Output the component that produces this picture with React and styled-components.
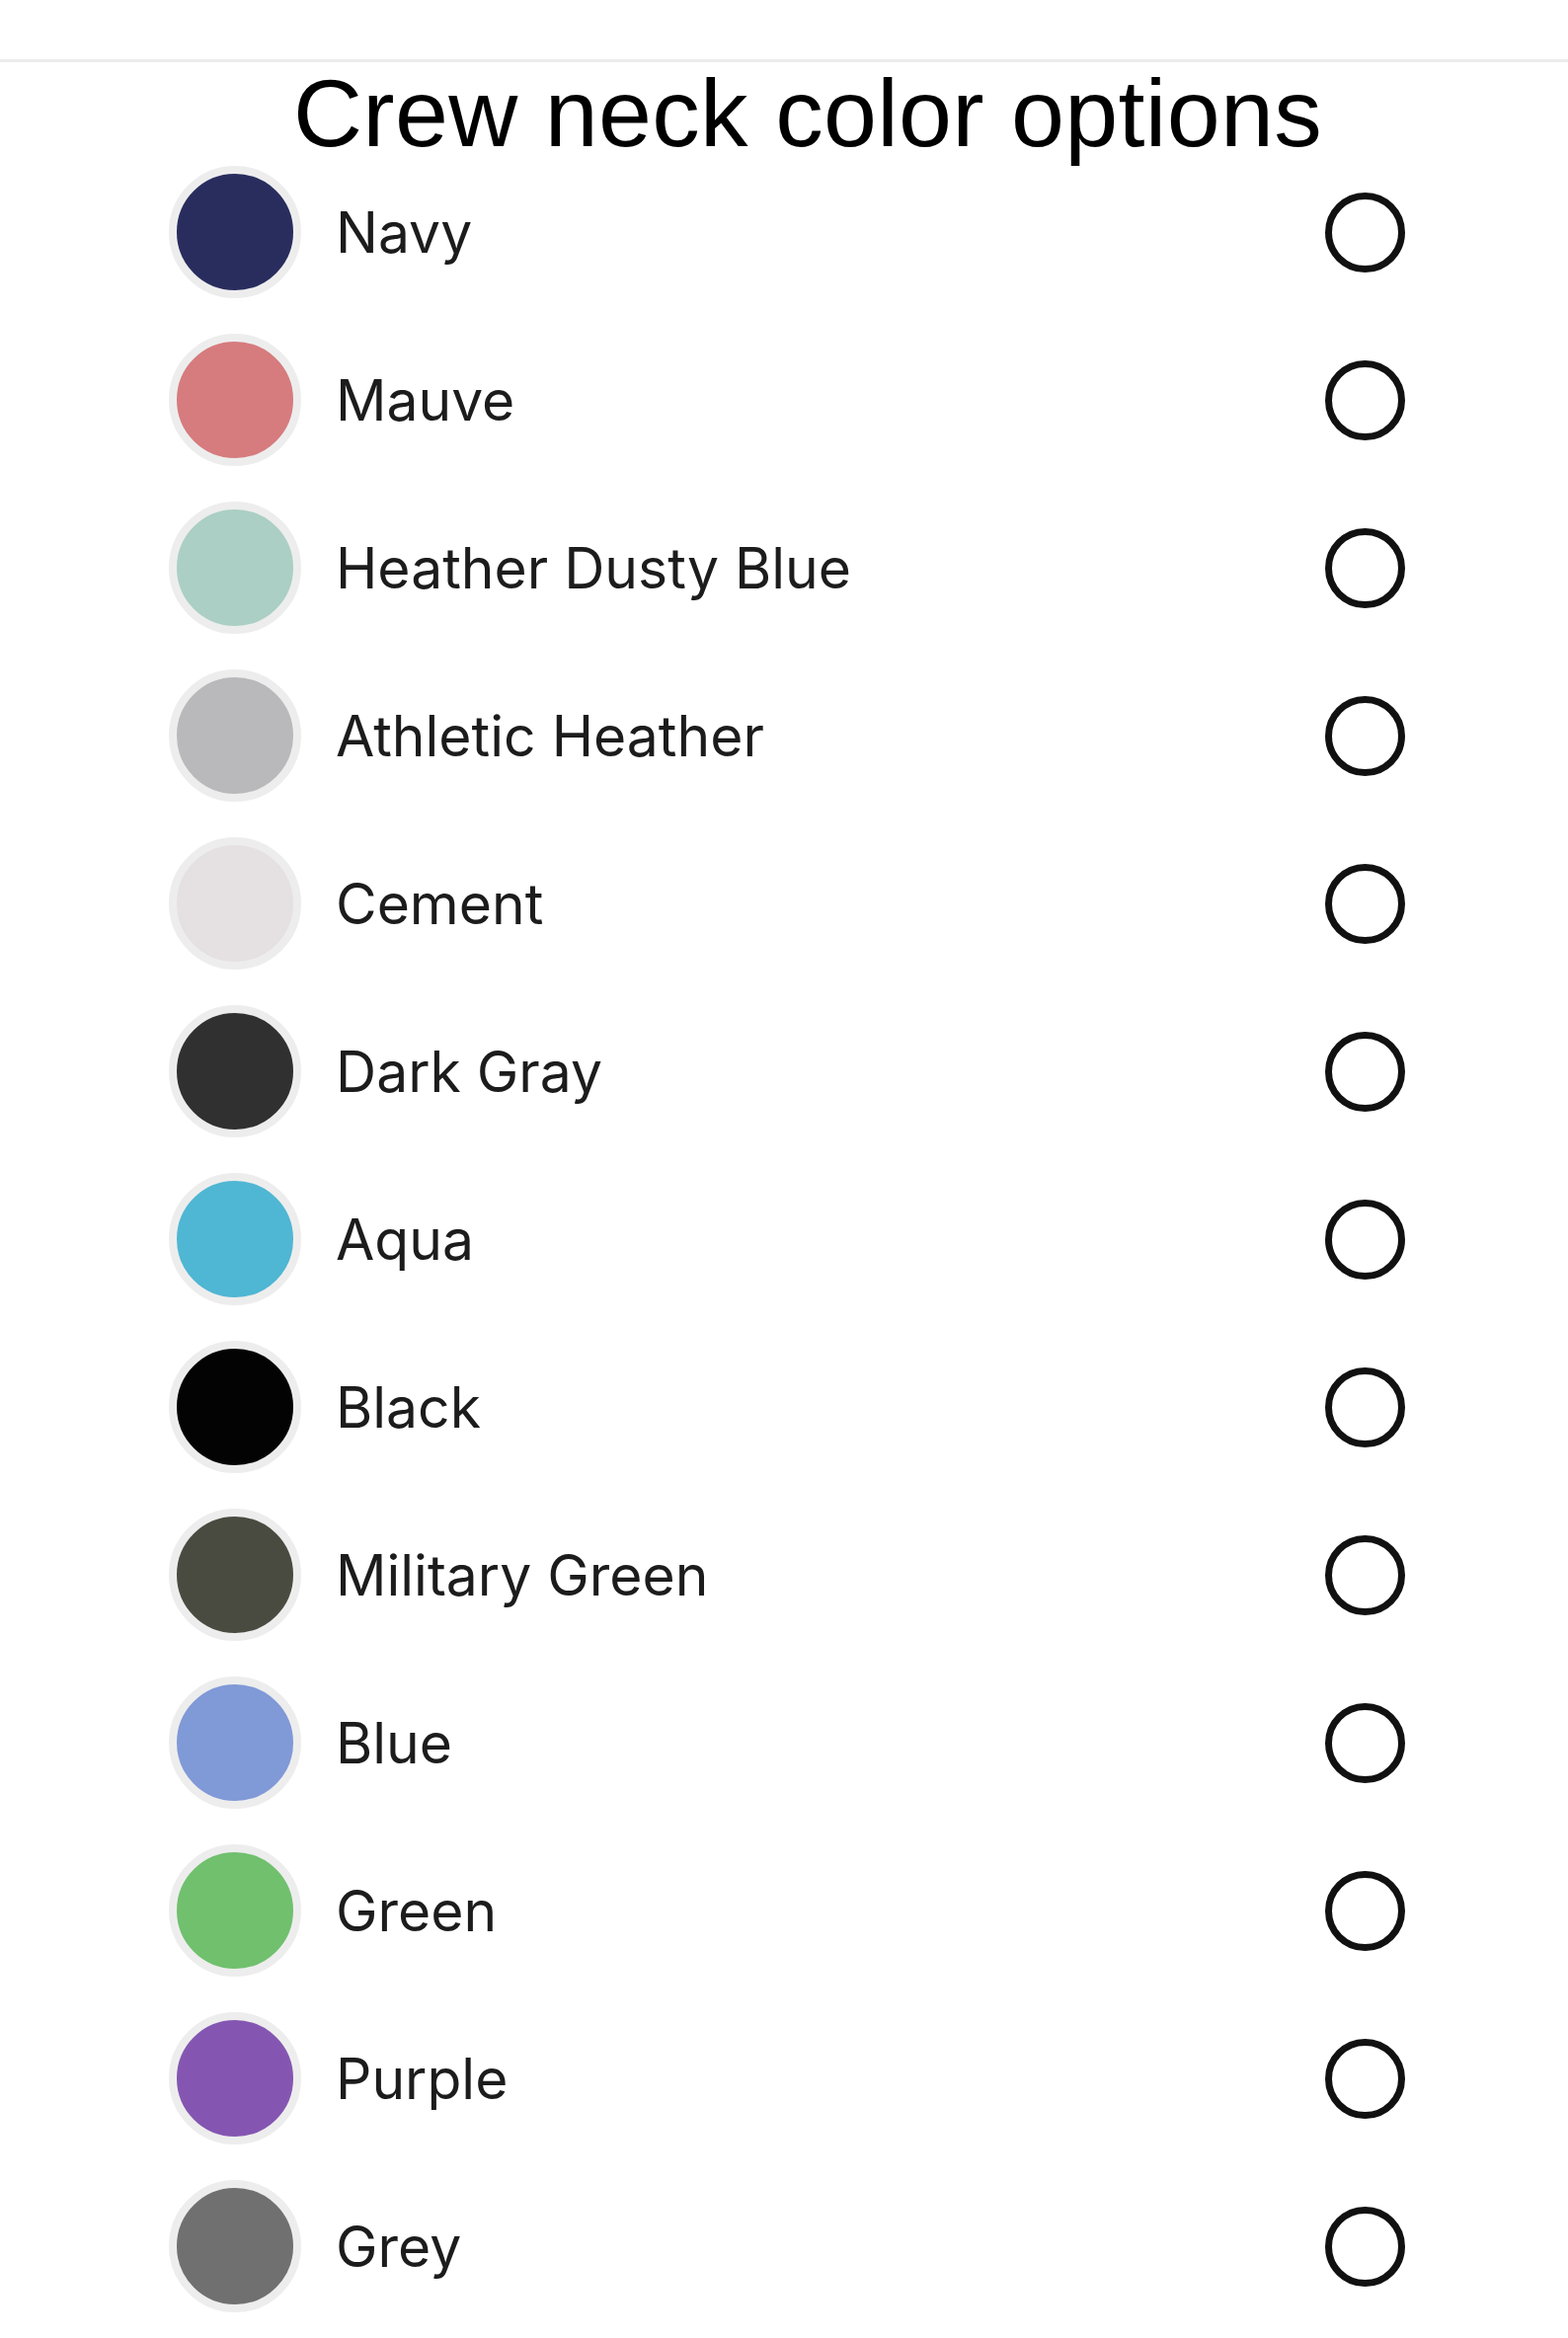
import React from 'react'
import styled, { createGlobalStyle } from 'styled-components'

const GlobalStyle = createGlobalStyle`
  html, body {
    margin: 0;
    padding: 0;
    background: #ffffff;
  }
`

const Page = styled.div`
  width: 1588px;
  min-height: 2368px;
  background: #fff;
  overflow: hidden;
`

const TopBar = styled.div`
  height: 60px;
  border-bottom: 3px solid #ececec;
`

const Title = styled.h1`
  margin: 17px 0 0;
  padding-left: 48px;
  font-family: 'Liberation Sans', Arial, sans-serif;
  font-weight: 400;
  font-size: 97px;
  line-height: 70px;
  height: 70px;
  text-align: center;
  color: #000;
  letter-spacing: 0.3px;
`

const List = styled.ul`
  list-style: none;
  margin: 0;
  padding: 0;
`

const Row = styled.li`
  display: flex;
  align-items: center;
  height: 170px;
  padding: 0 165px 0 171px;
`

const Swatch = styled.span`
  flex: none;
  width: 118px;
  height: 118px;
  border-radius: 50%;
  border: 8px solid #ededed;
  background-color: ${p => p.$color};
`

const Label = styled.span`
  flex: 1;
  margin-left: 35px;
  font-family: Inter, 'Noto Sans', sans-serif;
  font-size: 57px;
  font-weight: 400;
  color: #1c1c1c;
  line-height: 1;
`

const Radio = styled.span`
  flex: none;
  box-sizing: border-box;
  width: 81px;
  height: 81px;
  border-radius: 50%;
  border: 7px solid #111;
`

const colors = [
  { name: 'Navy', color: '#282d5e' },
  { name: 'Mauve', color: '#d67b7e' },
  { name: 'Heather Dusty Blue', color: '#abcfc4' },
  { name: 'Athletic Heather', color: '#b9b9bb' },
  { name: 'Cement', color: '#e5e0e1' },
  { name: 'Dark Gray', color: '#303030' },
  { name: 'Aqua', color: '#4fb6d3' },
  { name: 'Black', color: '#030303' },
  { name: 'Military Green', color: '#4a4b40' },
  { name: 'Blue', color: '#8099d7' },
  { name: 'Green', color: '#70c06e' },
  { name: 'Purple', color: '#8456b1' },
  { name: 'Grey', color: '#707070' }
]

const App = () => {
  return (
    <Page>
      <GlobalStyle />
      <TopBar />
      <Title>Crew neck color options</Title>
      <List>
        {colors.map(c => (
          <Row key={c.name}>
            <Swatch $color={c.color} />
            <Label>{c.name}</Label>
            <Radio />
          </Row>
        ))}
      </List>
    </Page>
  )
}

export default App
